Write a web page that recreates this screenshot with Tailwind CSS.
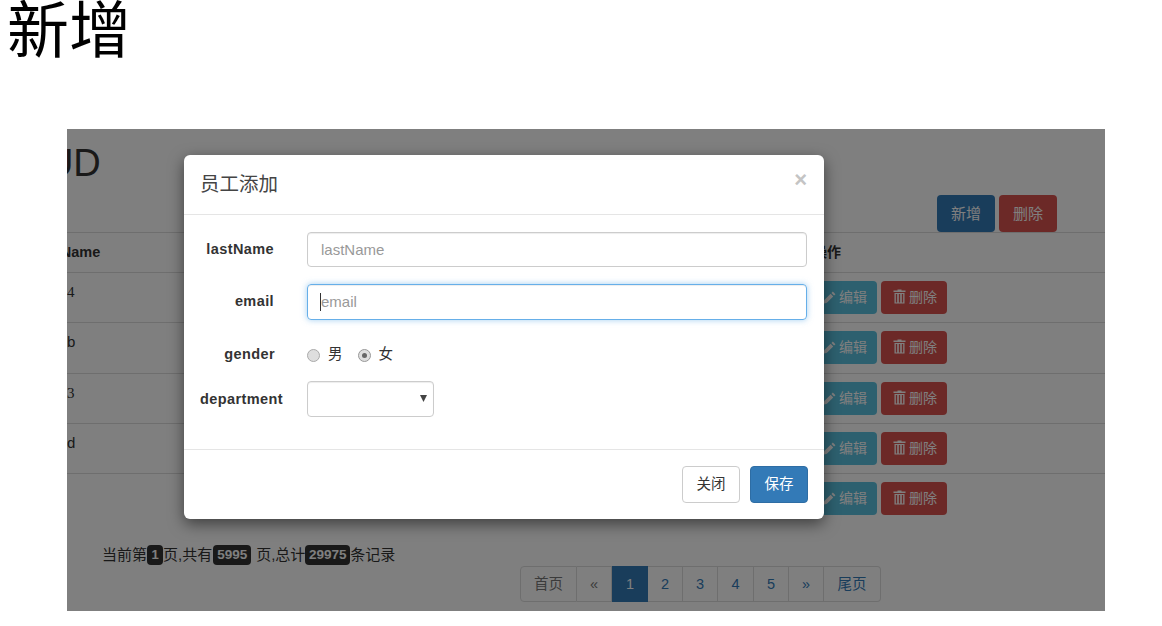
<!doctype html>
<html lang="zh-CN">
  <head>
    <meta charset="UTF-8" />
    <title>新增</title>
    <script src="https://cdn.jsdelivr.net/npm/@tailwindcss/browser@4"></script>
  </head>
  <body class="bg-white font-['Liberation_Sans','Noto_Sans_CJK_SC',sans-serif] text-[#333] text-[15px] overflow-hidden">
    <h1 class="h-[64px] pl-[7px] pt-[1px] text-[62px] leading-[62px] font-normal text-black font-['Liberation_Serif','Noto_Sans_CJK_SC',serif]">新增</h1>

    <div class="relative ml-[67px] mt-[65px] w-[1038px] h-[482px] overflow-hidden bg-white">
      <!-- page behind the dialog -->
      <div class="h-[66px] pt-[12px] -ml-[76px] text-[38px] leading-[44px]">CRUD</div>
      <div class="flex justify-end gap-[4px] pr-[48px] h-[37px]">
        <button class="w-[58px] h-[37px] pt-[1px] rounded bg-[#337ab7] text-white">新增</button>
        <button class="w-[58px] h-[37px] pt-[1px] rounded bg-[#d9534f] text-white">删除</button>
      </div>

      <div class="flex h-[40px] items-center border-t border-[#ddd] font-bold text-[14.5px]">
        <div class="w-[746px] -ml-[36px] shrink-0">empName</div>
        <div class="ml-[36px] text-[14px]">操作</div>
      </div>

      <div class="flex h-[50px] border-t border-[#ddd]">
        <div class="w-[746px] shrink-0 pt-[8px] font-['Liberation_Serif',serif]">4</div>
        <div class="flex gap-[4px] pt-[8px]">
          <button class="flex items-center justify-center gap-[3px] w-[64px] h-[33px] rounded bg-[#5bc0de] text-white text-[14px]">
            <svg class="w-[13px] h-[13px]" viewBox="0 0 14 14" fill="currentColor"><path d="M10.6 0.6l2.8 2.8-1.5 1.5-2.8-2.8zM8.2 3l2.8 2.8-6.8 6.8L0.4 13.6l1-3.8z" /></svg>编辑
          </button>
          <button class="flex items-center justify-center gap-[3px] w-[66px] h-[33px] pl-[2px] rounded bg-[#d9534f] text-white text-[14px]">
            <svg class="w-[13px] h-[15px] mb-[3px]" viewBox="0 0 13 15" fill="currentColor"><path fill-rule="evenodd" d="M4.5 0.5h4v1h4v1.5H0.5v-1.5h4zM1.5 4h10v10.5H1.5zM2.8 5v8.5h1.4V5zM5.8 5v8.5h1.4V5zM8.8 5v8.5h1.4V5z" /></svg>删除
          </button>
        </div>
      </div>
      <div class="flex h-[51px] border-t border-[#ddd]">
        <div class="w-[746px] shrink-0 pt-[8px]">b</div>
        <div class="flex gap-[4px] pt-[8px]">
          <button class="flex items-center justify-center gap-[3px] w-[64px] h-[33px] rounded bg-[#5bc0de] text-white text-[14px]">
            <svg class="w-[13px] h-[13px]" viewBox="0 0 14 14" fill="currentColor"><path d="M10.6 0.6l2.8 2.8-1.5 1.5-2.8-2.8zM8.2 3l2.8 2.8-6.8 6.8L0.4 13.6l1-3.8z" /></svg>编辑
          </button>
          <button class="flex items-center justify-center gap-[3px] w-[66px] h-[33px] pl-[2px] rounded bg-[#d9534f] text-white text-[14px]">
            <svg class="w-[13px] h-[15px] mb-[3px]" viewBox="0 0 13 15" fill="currentColor"><path fill-rule="evenodd" d="M4.5 0.5h4v1h4v1.5H0.5v-1.5h4zM1.5 4h10v10.5H1.5zM2.8 5v8.5h1.4V5zM5.8 5v8.5h1.4V5zM8.8 5v8.5h1.4V5z" /></svg>删除
          </button>
        </div>
      </div>
      <div class="flex h-[50px] border-t border-[#ddd]">
        <div class="w-[746px] shrink-0 pt-[8px] font-['Liberation_Serif',serif]">3</div>
        <div class="flex gap-[4px] pt-[8px]">
          <button class="flex items-center justify-center gap-[3px] w-[64px] h-[33px] rounded bg-[#5bc0de] text-white text-[14px]">
            <svg class="w-[13px] h-[13px]" viewBox="0 0 14 14" fill="currentColor"><path d="M10.6 0.6l2.8 2.8-1.5 1.5-2.8-2.8zM8.2 3l2.8 2.8-6.8 6.8L0.4 13.6l1-3.8z" /></svg>编辑
          </button>
          <button class="flex items-center justify-center gap-[3px] w-[66px] h-[33px] pl-[2px] rounded bg-[#d9534f] text-white text-[14px]">
            <svg class="w-[13px] h-[15px] mb-[3px]" viewBox="0 0 13 15" fill="currentColor"><path fill-rule="evenodd" d="M4.5 0.5h4v1h4v1.5H0.5v-1.5h4zM1.5 4h10v10.5H1.5zM2.8 5v8.5h1.4V5zM5.8 5v8.5h1.4V5zM8.8 5v8.5h1.4V5z" /></svg>删除
          </button>
        </div>
      </div>
      <div class="flex h-[50px] border-t border-[#ddd]">
        <div class="w-[746px] shrink-0 pt-[8px]">d</div>
        <div class="flex gap-[4px] pt-[8px]">
          <button class="flex items-center justify-center gap-[3px] w-[64px] h-[33px] rounded bg-[#5bc0de] text-white text-[14px]">
            <svg class="w-[13px] h-[13px]" viewBox="0 0 14 14" fill="currentColor"><path d="M10.6 0.6l2.8 2.8-1.5 1.5-2.8-2.8zM8.2 3l2.8 2.8-6.8 6.8L0.4 13.6l1-3.8z" /></svg>编辑
          </button>
          <button class="flex items-center justify-center gap-[3px] w-[66px] h-[33px] pl-[2px] rounded bg-[#d9534f] text-white text-[14px]">
            <svg class="w-[13px] h-[15px] mb-[3px]" viewBox="0 0 13 15" fill="currentColor"><path fill-rule="evenodd" d="M4.5 0.5h4v1h4v1.5H0.5v-1.5h4zM1.5 4h10v10.5H1.5zM2.8 5v8.5h1.4V5zM5.8 5v8.5h1.4V5zM8.8 5v8.5h1.4V5z" /></svg>删除
          </button>
        </div>
      </div>
      <div class="flex h-[50px] border-t border-[#ddd]">
        <div class="w-[746px] shrink-0"></div>
        <div class="flex gap-[4px] pt-[8px]">
          <button class="flex items-center justify-center gap-[3px] w-[64px] h-[33px] rounded bg-[#5bc0de] text-white text-[14px]">
            <svg class="w-[13px] h-[13px]" viewBox="0 0 14 14" fill="currentColor"><path d="M10.6 0.6l2.8 2.8-1.5 1.5-2.8-2.8zM8.2 3l2.8 2.8-6.8 6.8L0.4 13.6l1-3.8z" /></svg>编辑
          </button>
          <button class="flex items-center justify-center gap-[3px] w-[66px] h-[33px] pl-[2px] rounded bg-[#d9534f] text-white text-[14px]">
            <svg class="w-[13px] h-[15px] mb-[3px]" viewBox="0 0 13 15" fill="currentColor"><path fill-rule="evenodd" d="M4.5 0.5h4v1h4v1.5H0.5v-1.5h4zM1.5 4h10v10.5H1.5zM2.8 5v8.5h1.4V5zM5.8 5v8.5h1.4V5zM8.8 5v8.5h1.4V5z" /></svg>删除
          </button>
        </div>
      </div>

      <div class="flex items-start">
        <div class="w-[453px] shrink-0 pl-[35px] pt-[21px] flex items-center h-[43px] whitespace-nowrap text-[15px]">
          当前第<span class="flex items-center justify-center w-[16px] h-[20px] rounded bg-[#333] text-white text-[13px] font-bold">1</span>页,共有<span class="flex items-center justify-center w-[38px] h-[20px] ml-[1px] mr-[5px] rounded bg-[#333] text-white text-[13.5px] font-bold">5995</span>页,总计<span class="flex items-center justify-center w-[45px] h-[20px] rounded bg-[#333] text-white text-[13.5px] font-bold">29975</span>条记录
        </div>
        <div class="flex mt-[43px] h-[36px] text-[14.5px] text-[#337ab7]">
          <a class="flex items-center justify-center w-[57px] pt-[2px] border border-[#ddd] rounded-l text-[#777]">首页</a>
          <a class="flex items-center justify-center w-[35px] pt-[2px] border border-l-0 border-[#ddd] text-[#777]">«</a>
          <a class="flex items-center justify-center w-[36px] pt-[2px] bg-[#337ab7] text-white">1</a>
          <a class="flex items-center justify-center w-[35px] pt-[2px] border border-l-0 border-[#ddd]">2</a>
          <a class="flex items-center justify-center w-[35px] pt-[2px] border border-l-0 border-[#ddd]">3</a>
          <a class="flex items-center justify-center w-[36px] pt-[2px] border border-l-0 border-[#ddd]">4</a>
          <a class="flex items-center justify-center w-[35px] pt-[2px] border border-l-0 border-[#ddd]">5</a>
          <a class="flex items-center justify-center w-[35px] pt-[2px] border border-l-0 border-[#ddd]">»</a>
          <a class="flex items-center justify-center w-[57px] pt-[2px] border border-l-0 border-[#ddd] rounded-r">尾页</a>
        </div>
      </div>

      <!-- backdrop -->
      <div class="absolute inset-0 bg-black/50"></div>

      <!-- dialog -->
      <div class="absolute left-[117px] top-[26px] w-[640px] h-[364px] rounded-md bg-white shadow-[0_5px_15px_rgba(0,0,0,0.5)]">
        <div class="flex justify-between h-[60px] pl-[16px] pr-[16px] border-b border-[#e5e5e5]">
          <h4 class="pt-[17px] text-[19.5px] leading-[24px] font-normal text-[#444]">员工添加</h4>
          <span class="pt-[12px] pr-[1px] text-[22px] leading-[26px] font-bold text-[#c4c4c4]">×</span>
        </div>

        <form class="h-[235px] pt-[17px] border-b border-[#e5e5e5]">
          <div class="flex items-center h-[35px]">
            <label class="w-[123px] pr-[33px] text-right font-bold tracking-[0.4px] text-[14.5px]">lastName</label>
            <input class="w-[500px] h-[35px] px-[13px] rounded border border-[#ccc] text-[15px] placeholder:text-[#999] shadow-[inset_0_1px_1px_rgba(0,0,0,0.075)]" placeholder="lastName" />
          </div>
          <div class="flex items-center h-[36px] mt-[17px]">
            <label class="w-[123px] pr-[33px] text-right font-bold tracking-[0.4px] text-[14.5px]">email</label>
            <div class="relative">
              <input class="w-[500px] h-[36px] px-[13px] pb-[2px] rounded border border-[#66afe9] text-[15px] placeholder:text-[#999] outline-none shadow-[inset_0_1px_1px_rgba(0,0,0,0.075),0_0_6px_rgba(102,175,233,0.6)]" placeholder="email" />
              <span class="absolute left-[13px] top-[9px] w-px h-[18px] bg-[#333]"></span>
            </div>
          </div>
          <div class="flex items-center h-[20px] mt-[25px]">
            <label class="w-[123px] pr-[32px] text-right font-bold tracking-[0.4px] text-[14.5px]">gender</label>
            <span class="w-[13px] h-[13px] rounded-full border border-[#aaa] bg-[#dedede]"></span>
            <span class="ml-[8px] text-[14.5px]">男</span>
            <span class="flex items-center justify-center w-[13px] h-[13px] ml-[15px] rounded-full border border-[#999] bg-[#dedede]"><span class="w-[5px] h-[5px] rounded-full bg-[#666]"></span></span>
            <span class="ml-[8px] text-[14.5px]">女</span>
          </div>
          <div class="flex items-center h-[36px] mt-[16px]">
            <label class="w-[123px] pr-[24px] pt-[2px] text-right font-bold tracking-[0.4px] text-[14.5px] whitespace-nowrap">department</label>
            <div class="relative">
              <select class="block w-[127px] h-[36px] rounded border border-[#ccc] bg-white appearance-none shadow-[inset_0_1px_1px_rgba(0,0,0,0.075)]"><option></option></select>
              <svg class="absolute right-[7px] top-[13px] w-[7px] h-[8px]" viewBox="0 0 7 8" fill="#444"><path d="M0 1h7L3.5 8z" /></svg>
            </div>
          </div>
        </form>

        <div class="flex justify-end gap-[10px] pt-[16px] pr-[16px]">
          <button class="w-[58px] h-[37px] rounded border border-[#ccc] bg-white text-[14.5px]">关闭</button>
          <button class="w-[58px] h-[37px] rounded border border-[#2e6da4] bg-[#337ab7] text-white text-[14.5px]">保存</button>
        </div>
      </div>
    </div>
  </body>
</html>
